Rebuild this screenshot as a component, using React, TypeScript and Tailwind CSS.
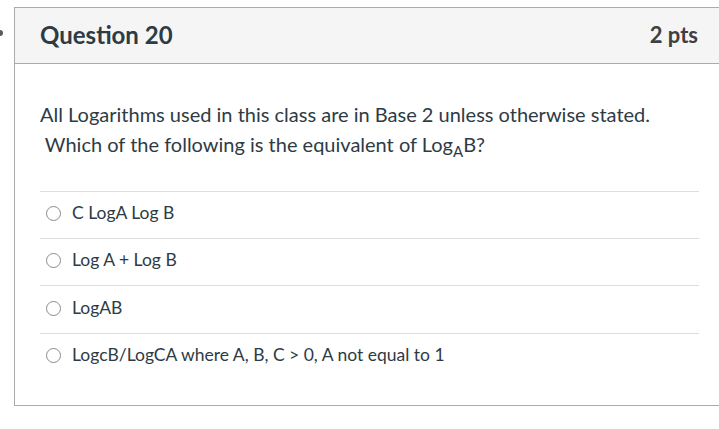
import React from "react";

const answers = [
  { text: "C LogA Log B", h: "h-[47px]" },
  { text: "Log A + Log B", h: "h-[47px]" },
  { text: "LogAB", h: "h-[48px]" },
  { text: "LogcB/LogCA where A, B, C > 0, A not equal to 1", h: "h-[47px]" },
];

function Radio() {
  return (
    <span className="ml-[6px] mr-[11px] inline-block h-[15px] w-[15px] shrink-0 rounded-full border border-[#8b8b8b] bg-white" />
  );
}

export default function App() {
  return (
    <div className="relative h-[429px] w-[719px] overflow-hidden bg-white font-['Lato',sans-serif] text-[#2d3b45]">
      {/* partially visible marker at the left edge */}
      <div className="absolute left-[-3px] top-[30px] h-[6px] w-[6px] rounded-full bg-[#5a5a5a]" />

      <div className="ml-[14px] mt-[7px] w-[712px] border border-[#ababab]">
        <div className="flex h-[56px] items-center justify-between border-b border-[#ababab] bg-[#f5f5f5] pb-[2px] pl-[25px] pr-[27px]">
          <div className="text-[24px] font-bold">Question 20</div>
          <div className="text-[22px] font-bold text-[#404040]">2 pts</div>
        </div>

        <div className="pl-[25px] pr-[26px] pb-[25px] pt-[35px]">
          <div className="text-[20px] leading-[30px]">
            <div>All Logarithms used in this class are in Base 2 unless otherwise stated.</div>
            <div>
              &nbsp;Which of the following is the equivalent of Log
              <span className="relative top-[5px] text-[15px]">A</span>B?
            </div>
          </div>

          <div className="mt-[30px]">
            {answers.map((a) => (
              <div
                key={a.text}
                className={`flex items-center border-t border-[#dedede] pb-[3px] text-[17.5px] ${a.h}`}
              >
                <Radio />
                <span>{a.text}</span>
              </div>
            ))}
          </div>
        </div>
      </div>
    </div>
  );
}
